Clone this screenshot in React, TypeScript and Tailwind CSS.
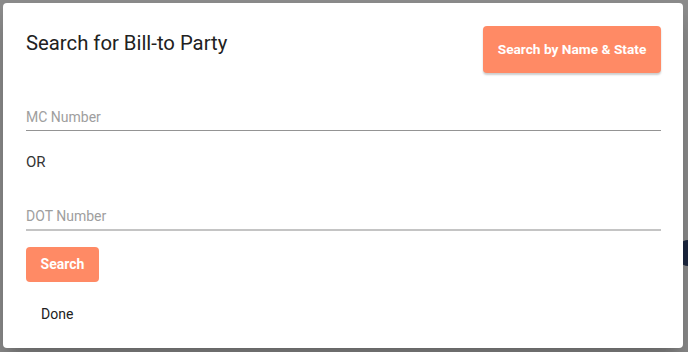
import { useState } from "react";

const font = { fontFamily: "Roboto, 'Liberation Sans', sans-serif" };

function LineField({ label, heavy }: { label: string; heavy?: boolean }) {
  const [value, setValue] = useState("");
  return (
    <input
      value={value}
      onChange={(e) => setValue(e.target.value)}
      placeholder={label}
      className={
        "block h-[29px] w-full bg-transparent pt-px text-[14px] text-[#212121] outline-none placeholder:text-[#9e9e9e] " +
        (heavy ? "border-b-2 border-[#c4c4c4]" : "border-b border-[#949494]")
      }
    />
  );
}

export default function App() {
  return (
    <div className="relative h-[352px] w-[688px] overflow-hidden bg-[#8c8c8c] pl-[3px] pt-[3px]" style={font}>
      {/* fab peeking out behind the backdrop */}
      <div className="absolute left-[676px] top-[240px] h-[26px] w-[26px] rounded-full bg-[#1c2740]" />

      <div className="relative flex h-[345px] w-[680px] flex-col rounded-[4px] bg-white pl-[23px] pr-[22px] pt-[23px] shadow-[0_11px_15px_-7px_rgba(0,0,0,0.2),0_24px_38px_3px_rgba(0,0,0,0.14)]">
        <div className="flex items-start justify-between">
          <h2 className="mt-[3px] text-[20.3px] font-normal leading-[28px] text-[#212121]">
            Search for Bill-to Party
          </h2>
          <button
            type="button"
            className="flex h-[47px] w-[178px] items-center justify-center rounded-[4px] bg-[#ff8a65] text-[13.7px] font-bold text-white shadow-[0_2px_2px_rgba(0,0,0,0.2)]"
          >
            Search by Name &amp; State
          </button>
        </div>

        <div className="mt-[29px]">
          <LineField label="MC Number" />
        </div>

        <p className="mt-[21px] text-[15px] leading-[20px] text-[#333333]">OR</p>

        <div className="mt-[30px]">
          <LineField label="DOT Number" heavy />
        </div>

        <div className="mt-[16px]">
          <button
            type="button"
            className="h-[35px] w-[73px] rounded-[4px] bg-[#ff8a65] text-[14px] font-bold text-white"
          >
            Search
          </button>
        </div>

        <div className="mt-[14px]">
          <button type="button" className="h-[36px] px-[15px] text-[14px] font-normal text-[#212121]">
            Done
          </button>
        </div>
      </div>
    </div>
  );
}
